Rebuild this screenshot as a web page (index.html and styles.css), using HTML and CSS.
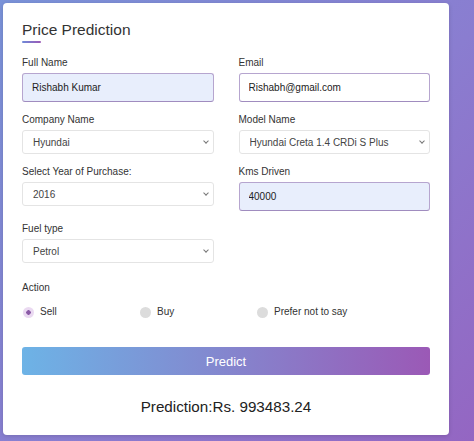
FILE: index.html
```html
<!DOCTYPE html>
<html lang="en">

<head>
    <meta charset="UTF-8" />
    <meta name="viewport" content="width=device-width, initial-scale=1.0" />
    <title>Price Prediction</title>
    <link rel="stylesheet" href="styles.css">
</head>

<body>
    <div class="card">
        <h2 class="title">Price Prediction</h2>
        <div class="title-bar"></div>

        <form class="form-grid" onsubmit="return false">
            <div class="field">
                <label for="name">Full Name</label>
                <input type="text" id="name" class="autofill" value="Rishabh Kumar" />
            </div>
            <div class="field">
                <label for="email">Email</label>
                <input type="text" id="email" value="Rishabh@gmail.com" />
            </div>
            <div class="field">
                <label for="company">Company Name</label>
                <div class="select-wrap">
                    <select id="company">
                        <option>Hyundai</option>
                    </select>
                </div>
            </div>
            <div class="field">
                <label for="model">Model Name</label>
                <div class="select-wrap">
                    <select id="model">
                        <option>Hyundai Creta 1.4 CRDi S Plus</option>
                    </select>
                </div>
            </div>
            <div class="field">
                <label for="year">Select Year of Purchase:</label>
                <div class="select-wrap">
                    <select id="year">
                        <option>2016</option>
                    </select>
                </div>
            </div>
            <div class="field">
                <label for="kms">Kms Driven</label>
                <input type="text" id="kms" class="autofill" value="40000" />
            </div>
            <div class="field">
                <label for="fuel">Fuel type</label>
                <div class="select-wrap">
                    <select id="fuel">
                        <option>Petrol</option>
                    </select>
                </div>
            </div>
        </form>

        <div class="action-title">Action</div>
        <div class="radio-row">
            <label class="radio"><input type="radio" name="action" checked /> Sell</label>
            <label class="radio"><input type="radio" name="action" /> Buy</label>
            <label class="radio"><input type="radio" name="action" /> Prefer not to say</label>
        </div>

        <button class="predict">Predict</button>
        <div class="result">Prediction:Rs. 993483.24</div>
    </div>
</body>

</html>
```

FILE: styles.css
```css
body,
html {
    margin: 0;
    padding: 0;
    font-family: "Liberation Sans", Arial, sans-serif;
}

body {
    min-height: 441px;
    padding: 3px;
    box-sizing: border-box;
    background: linear-gradient(135deg, #7a93d9 0%, #8a7dd0 55%, #9466c2 100%);
}

.card {
    width: 446px;
    box-sizing: border-box;
    padding: 17px 19px 18px;
    background-color: #fff;
    border-radius: 4px;
    box-shadow: 0 1px 4px rgba(0, 0, 0, 0.15);
}

.title {
    margin: 0;
    font-size: 15.5px;
    line-height: 20px;
    font-weight: normal;
    color: #333;
}

.title-bar {
    width: 19px;
    height: 2px;
    margin-top: 1px;
    border-radius: 1px;
    background: linear-gradient(to right, #6f8ad8, #9b59b6);
}

.form-grid {
    display: grid;
    grid-template-columns: 1fr 1fr;
    column-gap: 25px;
    row-gap: 11px;
    margin: 13px 0 0;
}

.field label {
    display: block;
    font-size: 10px;
    line-height: 14px;
    color: #333;
    margin-bottom: 3px;
}

.field input {
    display: block;
    width: 100%;
    height: 29px;
    box-sizing: border-box;
    padding: 0 9px;
    border: 1px solid #b6a5cf;
    border-bottom-color: #a08cbf;
    border-radius: 3px;
    font-family: inherit;
    font-size: 10px;
    color: #222;
    background-color: #fff;
    outline: none;
}

.field input.autofill {
    background-color: #e8eefc;
}

.select-wrap {
    position: relative;
}

/* small grey chevron in place of the native arrow */
.select-wrap::after {
    content: "";
    position: absolute;
    right: 6px;
    top: 9px;
    width: 3px;
    height: 3px;
    border-right: 1.5px solid #777;
    border-bottom: 1.5px solid #777;
    transform: rotate(45deg);
    pointer-events: none;
}

.field select {
    display: block;
    width: 100%;
    height: 24px;
    box-sizing: border-box;
    padding: 0 20px 0 10px;
    border: 1px solid #e4e4e4;
    border-radius: 3px;
    font-family: inherit;
    font-size: 10px;
    color: #444;
    background-color: #fff;
    appearance: none;
    -webkit-appearance: none;
}

.action-title {
    margin-top: 18px;
    font-size: 10px;
    line-height: 14px;
    color: #333;
}

.radio-row {
    display: flex;
    margin-top: 10px;
}

.radio {
    width: 117px;
    display: flex;
    align-items: center;
    gap: 6px;
    font-size: 10px;
    line-height: 14px;
    color: #333;
}

.radio input {
    appearance: none;
    -webkit-appearance: none;
    margin: 0 0 0 1px;
    width: 11px;
    height: 11px;
    border-radius: 50%;
    background-color: #dcdcdc;
}

.radio input:checked {
    background: radial-gradient(circle, #8a5aa6 0 2px, #ead9f1 2.5px);
}

.predict {
    display: block;
    width: 100%;
    height: 28px;
    margin-top: 28px;
    border: none;
    border-radius: 3px;
    background: linear-gradient(to right, #6db3e6, #9b59b6);
    color: #fff;
    font-family: inherit;
    font-size: 13px;
}

.result {
    margin-top: 21px;
    text-align: center;
    font-size: 15.2px;
    line-height: 21px;
    color: #222;
}
```
